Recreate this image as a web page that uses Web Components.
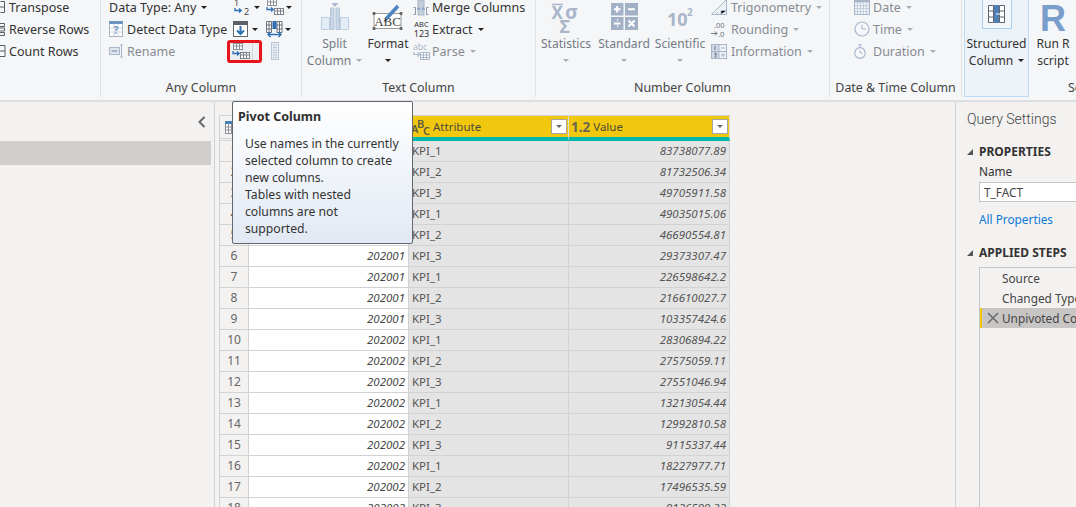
<!DOCTYPE html>
<html>
<head>
<meta charset="utf-8">
<title>Power Query</title>
<style>
  html, body { margin: 0; height: 507px; overflow: hidden; background: #f3f2f1; }
  body { font-family: "Noto Sans", "Open Sans", "Liberation Sans", sans-serif; color: #333; }
</style>
</head>
<body>
<pq-app></pq-app>

<script>
const B = "#6f94c4", P = "#a9b6ca", L = "#c9d8ea", D = "#59606b";

const ICONS = {
  transpose: `<svg width="6" height="14" viewBox="10 0 6 14"><path d="M10.5 1.5h4v11h-4M10 7h5" fill="none" stroke="${D}"/></svg>`,
  reverse: `<svg width="6" height="14" viewBox="10 0 6 14"><path d="M10 1.5h4.5v3H10M10 6h4.5v3H10M10 10.5h4.5v3H10" fill="none" stroke="${D}"/></svg>`,
  count: `<svg width="6" height="14" viewBox="10 0 6 14"><path d="M10 1.5h5v11h-5M10 7h5" fill="none" stroke="${D}"/></svg>`,
  detect: `<svg width="14" height="16" viewBox="0 0 14 16"><rect x=".5" y=".5" width="13" height="15" fill="#fff" stroke="#a9b4c2"/><rect x="0" y="0" width="14" height="3" fill="${B}"/><path d="M5 3v12M9 3v12M1 7h12M1 11h12" stroke="#d3d9e0"/><text x="7" y="13" font-size="10" font-weight="700" text-anchor="middle" fill="${B}" font-family="Noto Sans">?</text></svg>`,
  rename: `<svg width="16" height="14" viewBox="0 0 16 14"><rect x=".5" y="3.5" width="10" height="7" fill="#dfe6ef" stroke="${P}"/><path d="M2.500 7h6" stroke="${P}" stroke-width="2"/><path d="M11 1h3M12.500 1v12M11 13h3" stroke="${P}" fill="none"/></svg>`,
  sort12: `<svg width="17" height="17" viewBox="0 0 17 17"><text x="1" y="7" font-size="9" fill="#444" font-family="Noto Sans">1</text><text x="11" y="16" font-size="9" fill="#444" font-family="Noto Sans">2</text><path d="M2 9v2.500h6M6 9.500l2.200 2-2.200 2" fill="none" stroke="#2f6fb3" stroke-width="1.400"/></svg>`,
  pivotTop: `<svg width="18" height="16" viewBox="0 0 18 16"><rect x="1.500" y=".5" width="9" height="6" fill="#fff" stroke="#8a8f98"/><path d="M1.500 3h9M4.500 .5v6M7.500 .5v6" stroke="#8a8f98"/><path d="M1 8v2.500h6M5 8.500l2.200 2-2.200 2" fill="none" stroke="#2f6fb3" stroke-width="1.300"/><rect x="8.500" y="9.500" width="9" height="6" fill="#fff" stroke="#7c818a"/><path d="M8.500 12h9M11.500 9.500v6M14.500 9.500v6" stroke="#7c818a"/></svg>`,
  moveDown: `<svg width="15" height="16" viewBox="0 0 15 16"><rect x=".5" y=".5" width="14" height="15" fill="#fff" stroke="#666"/><rect x="0" y="0" width="15" height="4" fill="#5c6068"/><path d="M7.500 5v8M4 9.500l3.500 3.500 3.500-3.500" fill="none" stroke="#2f6fb3" stroke-width="2"/></svg>`,
  fill: `<svg width="17" height="17" viewBox="0 0 17 17"><path d="M.5.5h5v11h-5zM11 .5h5v11h-5zM.5 4h5M.5 8h5M11 4h5M11 8h5M3 .5v11M13.500 .5v11" fill="#fff" stroke="#6a7078"/><rect x="6.500" y="0" width="4" height="8" fill="#2f6fb3"/><path d="M2 13.500h13M4.500 11l-2.500 2.500 2.500 2.500M12.500 11l2.500 2.500-2.500 2.500" fill="none" stroke="#2f6fb3" stroke-width="1.400"/></svg>`,
  columnGrey: `<svg width="10" height="18" viewBox="0 0 10 18"><rect x="1.500" y=".5" width="7" height="17" fill="#e8edf4" stroke="#b8c7da"/><path d="M3 3h4M3 5.500h4M3 8h4M3 10.500h4M3 13h4M3 15.500h4" stroke="#b8c7da"/></svg>`,
  split: `<svg width="28" height="28" viewBox="0 0 28 28"><path d="M.5 15.500h8v12h-8zM19.500 15.500h8v12h-8z" fill="#e4ecf5" stroke="#bccfe4"/><path d="M9.500 6h3.500v21.500H9.500zM15 6h3.500v21.500H15z" fill="#c9d6e6" stroke="#b3c4d9"/><path d="M10.500 1h7l-3.500 4z" fill="${P}"/></svg>`,
  format: `<svg width="32" height="27" viewBox="0 0 32 27"><rect x="2" y="9.500" width="27" height="15" fill="#fff" stroke="#9a9a9a"/><path d="M1 8.500h2v2H1zM28 8.500h2v2h-2zM1 23.500h2v2H1zM28 23.500h2v2h-2z" fill="#666" stroke="#666"/><text x="15.500" y="22" font-size="13" text-anchor="middle" fill="#444" font-family="Liberation Serif">ABC</text><path d="M14 15l12-13" stroke="#4d84bd" stroke-width="3.500"/><path d="M11.500 18l2-3.500 1.800 1.600z" fill="#333"/></svg>`,
  merge: `<svg width="16" height="17" viewBox="0 0 16 17"><path d="M.5 8.500h2v7h-2M15.500 8.500h-2v7h2" fill="none" stroke="#8d96a3"/><rect x="5" y="1" width="6" height="15" fill="#c4cedb" stroke="#aab5c5"/><path d="M4 10h3l-1.500-1.500M12 10H9l1.500-1.500" stroke="${B}" fill="none"/></svg>`,
  abc123: `<svg width="17" height="18" viewBox="0 0 17 18"><text x="8.500" y="7" font-size="7.500" text-anchor="middle" fill="#333" font-family="Noto Sans">ABC</text><text x="8.500" y="17" font-size="9" text-anchor="middle" fill="#333" font-family="Noto Sans">123</text></svg>`,
  parse: `<svg width="17" height="17" viewBox="0 0 17 17"><text x="0" y="7" font-size="8.500" fill="${P}" font-family="Noto Sans">abc</text><path d="M1 9v2.500h5M4.500 9.500l2 2-2 2" fill="none" stroke="${P}" stroke-width="1.200"/><path d="M7.500 9.500h9v7h-9zM7.500 12h9M7.500 14.500h9M10.500 9.500v7M13.500 9.500v7" fill="#fff" stroke="${P}"/></svg>`,
  stats: `<svg width="28" height="30" viewBox="0 0 28 30"><path d="M0 1.500h11" stroke="${P}" stroke-width="1.500"/><text x="-.5" y="16" font-size="17" font-weight="700" fill="${P}" font-family="Noto Sans">X</text><text x="13" y="16" font-size="20" font-weight="700" fill="${P}" font-family="Noto Sans">σ</text><text x="7.500" y="30" font-size="18" font-weight="700" fill="${P}" font-family="Noto Sans">Σ</text></svg>`,
  standard: `<svg width="27" height="27" viewBox="0 0 27 27"><path d="M0 0h12.500v12.500H0zM14 0h13v12.500H14zM0 14h12.500v13H0zM14 14h13v13H14z" fill="#a3b1c6"/><path d="M3 6.200h6.500M6.200 3v6.500M17 6.200h7M3 20.500h6.500M17.500 17.500l6 6M23.500 17.500l-6 6" stroke="#fff" stroke-width="2"/><path d="M6 17.200h1M6 23.300h1" stroke="#fff" stroke-width="2"/></svg>`,
  scientific: `<svg width="26" height="30" viewBox="0 0 26 30"><text x="0" y="23" font-size="18" font-weight="700" fill="${P}" font-family="Noto Sans">10</text><text x="20" y="13" font-size="10" font-weight="700" fill="${P}" font-family="Noto Sans">2</text></svg>`,
  trig: `<svg width="16" height="16" viewBox="0 0 16 16"><path d="M.5 15.500L15.500 .5v15z" fill="#eef2f7" stroke="${P}"/><path d="M10 15v-3.500h5.500M6 15v-2" stroke="${P}"/></svg>`,
  round: `<svg width="16" height="16" viewBox="0 0 16 16"><text x="3" y="7" font-size="7.500" fill="#6d7684" font-family="Noto Sans">.00</text><text x="7" y="15.500" font-size="7.500" fill="#6d7684" font-family="Noto Sans">.0</text><path d="M0 12.500h6M4 10.500l2 2-2 2" fill="none" stroke="#6d7684"/></svg>`,
  info: `<svg width="16" height="15" viewBox="0 0 16 15"><rect x=".5" y=".5" width="15" height="14" fill="#eef2f7" stroke="${P}"/><rect x="1" y="1" width="7" height="13" fill="#d0d9e5"/><path d="M8 .5v14M.5 7.500h15M10 4h4M10 11h4M12 9v4" stroke="${P}"/><path d="M4 2v4M3.500 9h1.500v1.500H3.500M5 10.500V13H3.500" stroke="#6d7684" fill="none"/></svg>`,
  date: `<svg width="16" height="15" viewBox="0 0 16 15"><rect x=".5" y=".5" width="15" height="14" fill="#eef2f7" stroke="${P}"/><rect x="0" y="0" width="16" height="2.500" fill="${P}"/><path d="M3.500 3v11M6.500 3v11M9.500 3v11M12.500 3v11M1 5.500h14M1 8.500h14M1 11.500h14" stroke="#c4cfde"/></svg>`,
  time: `<svg width="16" height="16" viewBox="0 0 16 16"><circle cx="8" cy="8" r="7" fill="#f6f8fb" stroke="${P}" stroke-width="1.200"/><path d="M8 3.500V8h4" fill="none" stroke="${P}"/></svg>`,
  duration: `<svg width="12" height="15" viewBox="0 0 12 15"><circle cx="6" cy="9" r="5.300" fill="#f6f8fb" stroke="${P}" stroke-width="1.200"/><path d="M4 .8h4M6 1v2.500M6 6v3h2.500" fill="none" stroke="${P}"/></svg>`,
  structured: `<svg width="17" height="18" viewBox="0 0 17 18"><path d="M.5.5h5v17h-5zM11.500 .5h5v17h-5z" fill="#fff" stroke="#5f646c"/><path d="M.5 6h5M.5 12h5M11.500 6h5M11.500 12h5" stroke="#5f646c"/><rect x="6" y="0" width="5" height="18" fill="#4e80b6"/><path d="M8 9h6M12 7l2 2-2 2" stroke="#fff" fill="none"/></svg>`,
  rscript: `<svg width="30" height="32" viewBox="0 0 30 32"><text x="15" y="29" font-size="36" font-weight="700" text-anchor="middle" fill="#7a9ecb" font-family="Liberation Sans">R</text></svg>`
};

class RbIcon extends HTMLElement {
  connectedCallback() {
    const root = this.shadowRoot || this.attachShadow({mode: "open"});
    root.innerHTML = `<style>:host{display:inline-flex;line-height:0} svg{display:block;overflow:visible}</style>${ICONS[this.getAttribute("name")] || ""}`;
  }
}
customElements.define("rb-icon", RbIcon);

class RbGroup extends HTMLElement {
  connectedCallback() {
    const root = this.shadowRoot || this.attachShadow({mode: "open"});
    const w = this.getAttribute("w");
    root.innerHTML = `
      <style>
        :host { display: flex; flex-direction: column; flex: none; width: ${w}px; height: 97px; box-sizing: border-box; border-right: 1px solid #dfe1e4; }
        .body { display: flex; height: 79px; padding-left: ${this.getAttribute("pad") || 0}px; box-sizing: border-box; }
        .label { text-align: center; font-size: 12.4px; line-height: 18px; color: #444; white-space: nowrap; }
      </style>
      <div class="body"><slot></slot></div>
      <div class="label">${this.getAttribute("label") || ""}</div>`;
  }
}
customElements.define("rb-group", RbGroup);

class RbSmall extends HTMLElement {
  connectedCallback() {
    const root = this.shadowRoot || this.attachShadow({mode: "open"});
    const off = this.hasAttribute("off");
    const iw = this.getAttribute("iw") || 0;
    const icon = this.getAttribute("icon");
    const text = this.getAttribute("text");
    const arrow = this.hasAttribute("arrow");
    root.innerHTML = `
      <style>
        :host { display: flex; align-items: center; height: 22px; font-size: 12.5px; white-space: nowrap; color: ${off ? "#858b93" : "#333"}; }
        .i { width: ${iw}px; flex: none; display: flex; align-items: center; }
        .a { width: 0; height: 0; border-left: 3px solid transparent; border-right: 3px solid transparent; border-top: 3px solid ${off ? "#a8adb5" : "#222"}; margin-left: ${this.getAttribute("ag") || 5}px; }
      </style>
      ${icon ? `<span class="i"><rb-icon name="${icon}"></rb-icon></span>` : ""}
      ${text ? `<span>${text}</span>` : ""}
      ${arrow ? `<span class="a"></span>` : ""}
      <slot></slot>`;
  }
}
customElements.define("rb-small", RbSmall);

class RbLarge extends HTMLElement {
  connectedCallback() {
    const root = this.shadowRoot || this.attachShadow({mode: "open"});
    const off = this.hasAttribute("off");
    const lines = (this.getAttribute("text") || "").split("|");
    const arrow = this.getAttribute("arrow");
    root.innerHTML = `
      <style>
        :host { display: flex; flex-direction: column; align-items: center; flex: none; width: ${this.getAttribute("w")}px; font-size: 12.1px; line-height: 17px; white-space: nowrap; color: ${off ? "#747b85" : "#333"}; }
        .i { height: 35px; display: flex; align-items: ${this.getAttribute("top") ? "flex-start" : "center"}; justify-content: center; padding-top: ${this.getAttribute("top") || 0}px; box-sizing: border-box; }
        .l { height: 17px; display: flex; align-items: center; }
        .a { width: 0; height: 0; border-left: 3px solid transparent; border-right: 3px solid transparent; border-top: 3px solid ${off ? "#a8adb5" : "#222"}; }
        .l span + .a { margin-left: 5px; }
      </style>
      <div class="i"><slot><rb-icon name="${this.getAttribute("icon")}"></rb-icon></slot></div>
      ${lines.map((t, i) => `<div class="l"><span>${t}</span>${arrow === "inline" && i === lines.length - 1 ? `<span class="a"></span>` : ""}</div>`).join("")}
      ${arrow === "below" ? `<div class="l"><span class="a"></span></div>` : ""}`;
  }
}
customElements.define("rb-large", RbLarge);

class PqRibbon extends HTMLElement {
  connectedCallback() {
    const root = this.attachShadow({mode: "open"});
    root.innerHTML = `
      <style>
        :host { display: flex; flex: none; height: 100px; background: #f5f6f8; border-bottom: 2px solid #dcdee1; overflow: hidden; box-sizing: content-box; }
        .col { display: flex; flex-direction: column; flex: none; margin-top: -4px; }
        .redbox { width: 35px; height: 23px; box-sizing: border-box; margin-left: -6px; border: 3px solid #e8141c; border-radius: 3px; background: #eceef1; display: flex; align-items: center; padding-left: 2px; }
        .redbox i { width: 1px; height: 17px; background: #d3d5d9; margin-left: 2px; }
        .structured { width: 65px; height: 97px; margin: 0 1px 0 2px; box-sizing: border-box; flex: none; background: #edf2f8; border: 1px solid #bcd9f5; border-top: 0; display: flex; flex-direction: column; align-items: center; }
        .sbox { width: 30px; height: 29px; flex: none; box-sizing: border-box; border: 1px solid #a9cff5; border-top: 0; margin-bottom: 6px; display: flex; align-items: center; justify-content: center; background: #f3f6fa; }
      </style>
      <rb-group w="101" label="" pad="0">
        <div class="col" style="padding-left:0">
          <rb-small iw="9" icon="transpose" text="Transpose"></rb-small>
          <rb-small iw="9" icon="reverse" text="Reverse Rows"></rb-small>
          <rb-small iw="9" icon="count" text="Count Rows"></rb-small>
        </div>
      </rb-group>
      <rb-group w="201" label="Any Column" pad="8">
        <div class="col" style="width:124px">
          <rb-small text="Data Type: Any" arrow></rb-small>
          <rb-small iw="18" icon="detect" text="Detect Data Type"></rb-small>
          <rb-small iw="18" icon="rename" text="Rename" off></rb-small>
        </div>
        <div class="col" style="width:33px">
          <rb-small iw="20" icon="sort12" arrow ag="1"></rb-small>
          <rb-small iw="18" icon="moveDown" arrow ag="1"></rb-small>
          <rb-small><span class="redbox"><rb-icon name="pivotTop"></rb-icon><i></i></span></rb-small>
        </div>
        <div class="col">
          <rb-small iw="19" icon="pivotTop" arrow ag="1"></rb-small>
          <rb-small iw="18" icon="fill" arrow ag="1"></rb-small>
          <rb-small style="padding-left:4px"><rb-icon name="columnGrey"></rb-icon></rb-small>
        </div>
      </rb-group>
      <rb-group w="234" label="Text Column">
        <rb-large w="65" icon="split" text="Split|Column" arrow="inline" off top="2"></rb-large>
        <rb-large w="42" icon="format" text="Format" arrow="below"></rb-large>
        <div class="col" style="margin-left:4px">
          <rb-small iw="19" icon="merge" text="Merge Columns"></rb-small>
          <rb-small iw="19" icon="abc123" text="Extract" arrow></rb-small>
          <rb-small iw="19" icon="parse" text="Parse" arrow off></rb-small>
        </div>
      </rb-group>
      <rb-group w="294" label="Number Column">
        <rb-large w="60" icon="stats" text="Statistics" arrow="below" off></rb-large>
        <rb-large w="56" icon="standard" text="Standard" arrow="below" off top="3"></rb-large>
        <rb-large w="56" icon="scientific" text="Scientific" arrow="below" off></rb-large>
        <div class="col" style="margin-left:3px">
          <rb-small iw="20" icon="trig" text="Trigonometry" arrow off></rb-small>
          <rb-small iw="20" icon="round" text="Rounding" arrow off></rb-small>
          <rb-small iw="20" icon="info" text="Information" arrow off></rb-small>
        </div>
      </rb-group>
      <rb-group w="132" label="Date &amp; Time Column" pad="24">
        <div class="col">
          <rb-small iw="19" icon="date" text="Date" arrow off></rb-small>
          <rb-small iw="19" icon="time" text="Time" arrow off></rb-small>
          <rb-small iw="19" icon="duration" text="Duration" arrow off></rb-small>
        </div>
      </rb-group>
      <div class="structured">
        <div class="sbox"><rb-icon name="structured"></rb-icon></div>
        <rb-large w="65" text="Structured|Column" arrow="inline" style="margin-top:-35px"><span></span></rb-large>
      </div>
      <rb-group w="116" label="Scripts">
        <rb-large w="46" icon="rscript" text="Run R|script"></rb-large>
      </rb-group>`;
  }
}
customElements.define("pq-ribbon", PqRibbon);

class PqQueries extends HTMLElement {
  connectedCallback() {
    this.attachShadow({mode: "open"}).innerHTML = `
      <style>
        :host { display: block; flex: none; width: 214px; border-right: 1px solid #d2d2d2; box-sizing: content-box; }
        .top { height: 39px; display: flex; justify-content: flex-end; align-items: center; padding-right: 8px; box-sizing: border-box; }
        .sel { width: 211px; height: 24px; background: #d0cfcd; }
      </style>
      <div class="top"><svg width="8" height="12" viewBox="0 0 8 12"><path d="M6.500 1L1.500 6l5 5" fill="none" stroke="#666" stroke-width="2"/></svg></div>
      <div class="sel"></div>`;
  }
}
customElements.define("pq-queries", PqQueries);

const ROWS = [
  ["KPI_1", "83738077.89"], ["KPI_2", "81732506.34"], ["KPI_3", "49705911.58"],
  ["KPI_1", "49035015.06"], ["KPI_2", "46690554.81"], ["KPI_3", "29373307.47"],
  ["KPI_1", "226598642.2"], ["KPI_2", "216610027.7"], ["KPI_3", "103357424.6"],
  ["KPI_1", "28306894.22"], ["KPI_2", "27575059.11"], ["KPI_3", "27551046.94"],
  ["KPI_1", "13213054.44"], ["KPI_2", "12992810.58"], ["KPI_3", "9115337.44"],
  ["KPI_1", "18227977.71"], ["KPI_2", "17496535.59"], ["KPI_3", "9126599.32"]
];

class PqGrid extends HTMLElement {
  connectedCallback() {
    const filter = `<span class="filter"><b></b></span>`;
    // the tooltip sits over the first five period cells, so they stay empty
    const rows = ROWS.map((r, i) => `
      <div class="n">${i + 1}</div>
      <div class="c period">${i < 5 ? "" : i < 9 ? "202001" : "202002"}</div>
      <div class="c attr">${r[0]}</div>
      <div class="c val">${r[1]}</div>`).join("");
    this.attachShadow({mode: "open"}).innerHTML = `
      <style>
        :host { display: block; flex: none; width: 511px; margin: 13px 0 0 4px; font-size: 11.5px; }
        .g { display: grid; grid-template-columns: 29px 160px 160px 161px; grid-template-rows: 25px; grid-auto-rows: 21px; border-left: 1px solid #d2d2d2; border-right: 1px solid #d2d2d2; border-top: 1px solid #d2d2d2; }
        .h { height: 25px; box-sizing: border-box; border-right: 1px solid #dcdcdc; background: #f2c80f; border-bottom: 4px solid #01b8aa; display: flex; align-items: center; color: #4d4a3a; }
        .h.corner { background: #f3f2f1; border-bottom: 3px double #d2d2d2; border-right: 1px solid #d2d2d2; padding-left: 5px; }
        .h .abc { position: relative; width: 20px; height: 20px; margin: 0 2px 0 2px; color: #5d5a45; font-weight: 600; font-size: 11px; flex: none; }
        .abc span { position: absolute; line-height: 11px; }
        .h .num { font-weight: 700; font-size: 13.5px; color: #6a664e; margin: 0 3px 0 2px; }
        .filter { margin-left: auto; margin-right: 1px; width: 16px; height: 15px; box-sizing: border-box; background: #fff; border: 1px solid #a5a5a5; display: flex; align-items: center; justify-content: center; }
        .filter b { width: 0; height: 0; border-left: 3.500px solid transparent; border-right: 3.500px solid transparent; border-top: 3.500px solid #6a6a6a; }
        .n, .c { box-sizing: border-box; border-bottom: 1px solid #d2d2d2; border-right: 1px solid #d2d2d2; display: flex; align-items: center; height: 21px; white-space: nowrap; padding-bottom: 1px; }
        .n { justify-content: center; background: #f3f2f1; color: #666; font-size: 12px; }
        .period { justify-content: flex-end; padding-right: 3px; background: #fff; font-style: italic; color: #444; }
        .attr { background: #e4e4e4; padding-left: 3px; color: #555; }
        .val { background: #e4e4e4; justify-content: flex-end; padding-right: 3px; font-style: italic; color: #555; }
      </style>
      <div class="g">
        <div class="h corner"><svg width="10" height="13" viewBox="0 0 10 13"><rect x=".5" y=".5" width="9" height="12" fill="#fff" stroke="#8b8f96"/><rect width="10" height="3" fill="#4a7fbb"/><path d="M3.500 3v9M6.500 3v9M1 6h8M1 9h8" stroke="#8b8f96"/></svg></div>
        <div class="h">${filter}</div>
        <div class="h"><span class="abc"><span style="left:0;top:6px">A</span><span style="left:6px;top:1px">B</span><span style="left:12px;top:8px">C</span></span><span>Attribute</span>${filter}</div>
        <div class="h"><span class="num">1.2</span><span>Value</span>${filter}</div>
        ${rows}
      </div>`;
  }
}
customElements.define("pq-grid", PqGrid);

class PqSettings extends HTMLElement {
  connectedCallback() {
    const tri = `<svg width="6" height="6" viewBox="0 0 6 6"><path d="M0 6L6 0v6z" fill="#555"/></svg>`;
    this.attachShadow({mode: "open"}).innerHTML = `
      <style>
        :host { display: flex; flex-direction: column; flex: none; width: 109px; margin-left: auto; height: 405px; border-left: 1px solid #d2d2d2; padding-left: 11px; box-sizing: content-box; overflow: hidden; color: #333; font-size: 11.8px; white-space: nowrap; }
        .title { font-family: Roboto, "Noto Sans", sans-serif; font-weight: 300; font-size: 14px; color: #444; margin-top: 7px; line-height: 20px; }
        .sec { display: flex; align-items: center; font-weight: 700; font-size: 12px; color: #333; line-height: 18px; }
        .sec svg { margin: 0 6px 0 0; }
        .name { margin: 0 0 0 12px; line-height: 16px; }
        .input { margin: 3px 0 0 12px; width: 130px; height: 20px; flex: none; box-sizing: border-box; border: 1px solid #c6c6c6; background: #fff; padding-left: 4px; line-height: 18px; color: #444; }
        .link { margin: 9px 0 0 12px; color: #0f7ad6; line-height: 16px; }
        .steps { margin: 5px 0 0 12px; border-left: 1px solid #c6c6c6; border-top: 1px solid #c6c6c6; width: 130px; flex: 1; box-sizing: border-box; }
        .step { height: 20px; line-height: 20px; padding-left: 22px; color: #444; position: relative; }
        .step.on { background: #c8c6c4; border-left: 2px solid #f2c80f; padding-left: 20px; box-sizing: border-box; display: flex; align-items: center; }
        .step.on svg { position: absolute; left: 5px; top: 4px; }
      </style>
      <div class="title">Query Settings</div>
      <div class="sec" style="margin-top:14px">${tri}PROPERTIES</div>
      <div class="name" style="margin-top:2px">Name</div>
      <div class="input">T_FACT</div>
      <div class="link">All Properties</div>
      <div class="sec" style="margin-top:17px">${tri}APPLIED STEPS</div>
      <div class="steps">
        <div class="step">Source</div>
        <div class="step">Changed Type</div>
        <div class="step on"><svg width="12" height="12" viewBox="0 0 12 12"><path d="M1 1l10 10M11 1L1 11" stroke="#6a6a6a" stroke-width="1.500"/></svg>Unpivoted Columns</div>
      </div>`;
  }
}
customElements.define("pq-settings", PqSettings);

class PqTooltip extends HTMLElement {
  connectedCallback() {
    this.attachShadow({mode: "open"}).innerHTML = `
      <style>
        :host { position: absolute; left: 232px; top: 101px; width: 181px; height: 143px; box-sizing: border-box; border: 1px solid #64676c; border-radius: 2px; background: linear-gradient(#ffffff, #e2e9f4); padding: 6px 5px; color: #333; font-size: 12.2px; white-space: nowrap; }
        .t { font-weight: 700; font-size: 12.5px; line-height: 17px; color: #2f2f2f; }
        .b { margin: 10px 0 0 7px; line-height: 17px; }
      </style>
      <div class="t"><slot name="title"></slot></div>
      <div class="b"><slot></slot></div>`;
  }
}
customElements.define("pq-tooltip", PqTooltip);

class PqApp extends HTMLElement {
  connectedCallback() {
    this.attachShadow({mode: "open"}).innerHTML = `
      <style>
        :host { display: flex; flex-direction: column; position: relative; width: 1076px; height: 507px; overflow: hidden; background: #f3f2f1; }
        main { display: flex; flex: 1; min-height: 0; overflow: hidden; }
      </style>
      <pq-ribbon></pq-ribbon>
      <main>
        <pq-queries></pq-queries>
        <pq-grid></pq-grid>
        <pq-settings></pq-settings>
      </main>
      <pq-tooltip>
        <span slot="title">Pivot Column</span>
        Use names in the currently<br>selected column to create<br>new columns.<br>Tables with nested<br>columns are not<br>supported.
      </pq-tooltip>`;
  }
}
customElements.define("pq-app", PqApp);
</script>
</body>
</html>
